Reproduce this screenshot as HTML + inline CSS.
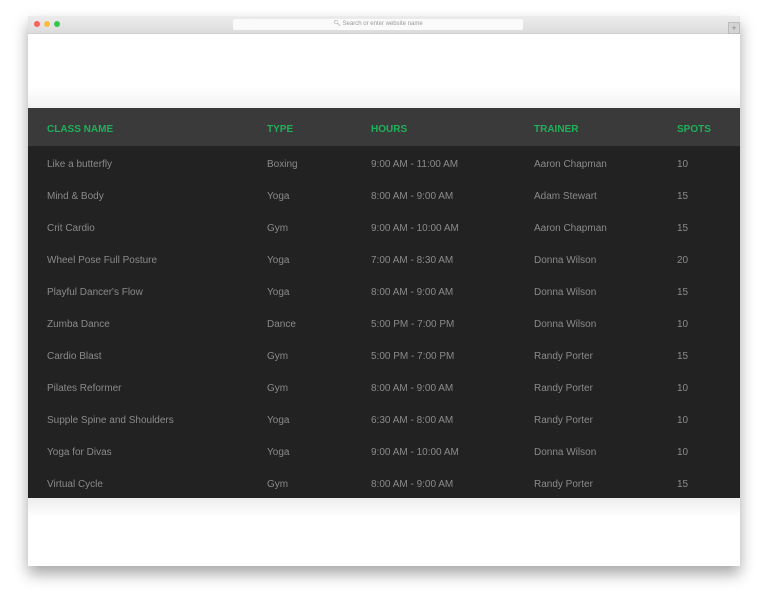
<!DOCTYPE html>
<html><head><style>
*{margin:0;padding:0;box-sizing:border-box}
body{width:768px;height:605px;background:#fff;font-family:"Liberation Sans",sans-serif;position:relative;overflow:hidden}
.win{position:absolute;left:28px;top:16px;width:712px;height:550px;background:#fff;box-shadow:0 8px 14px rgba(0,0,0,.35)}
.bar{height:18px;background:linear-gradient(#ececec,#dcdcdc);border-bottom:1px solid #cfcfcf;position:relative}
.dot{position:absolute;top:5px;width:6px;height:6px;border-radius:50%}
.url{position:absolute;left:205px;top:3px;width:290px;height:11px;background:#fafafa;border-radius:2px;font-size:6px;color:#999;text-align:center;line-height:11px}
.plus{position:absolute;right:0;top:6px;width:12px;height:12px;background:#d4d4d4;border:1px solid #bbb;font-size:9px;color:#888;text-align:center;line-height:10px}
.fadeT{position:absolute;left:0;top:70px;width:712px;height:22px;background:linear-gradient(rgba(0,0,0,0),rgba(0,0,0,.05))}
.fadeB{position:absolute;left:0;top:482px;width:712px;height:20px;background:linear-gradient(rgba(0,0,0,.07),rgba(0,0,0,0))}
.tbl{position:absolute;left:0;top:92px;width:712px}
.hd{height:38px;background:#3a3a3a;position:relative}
.bd{background:#222}
.row{height:32px;position:relative}
.c{position:absolute;top:3px;font-size:10px;white-space:nowrap}
.hd .c{line-height:38px;color:#1fb05a;font-weight:bold;font-size:10px}
.row .c{line-height:32px;color:#8a8a8a}
.c1{left:19px}.c2{left:239px}.c3{left:343px}.c4{left:506px}.c5{left:649px}
</style></head><body>
<div class="win">
<div class="bar">
<div class="dot" style="left:6px;background:#fc605b"></div>
<div class="dot" style="left:16px;background:#fdbc40"></div>
<div class="dot" style="left:26px;background:#34c84a"></div>
<div class="url">&#x1F50D;&#xFE0E; Search or enter website name</div>
<div class="plus">+</div>
</div>
<div class="fadeT"></div>
<div class="fadeB"></div>
<div class="tbl">
<div class="hd"><div class="c c1">CLASS NAME</div><div class="c c2">TYPE</div><div class="c c3">HOURS</div><div class="c c4">TRAINER</div><div class="c c5">SPOTS</div></div>
<div class="bd">
<div class="row"><div class="c c1">Like a butterfly</div><div class="c c2">Boxing</div><div class="c c3">9:00 AM - 11:00 AM</div><div class="c c4">Aaron Chapman</div><div class="c c5">10</div></div>
<div class="row"><div class="c c1">Mind &amp; Body</div><div class="c c2">Yoga</div><div class="c c3">8:00 AM - 9:00 AM</div><div class="c c4">Adam Stewart</div><div class="c c5">15</div></div>
<div class="row"><div class="c c1">Crit Cardio</div><div class="c c2">Gym</div><div class="c c3">9:00 AM - 10:00 AM</div><div class="c c4">Aaron Chapman</div><div class="c c5">15</div></div>
<div class="row"><div class="c c1">Wheel Pose Full Posture</div><div class="c c2">Yoga</div><div class="c c3">7:00 AM - 8:30 AM</div><div class="c c4">Donna Wilson</div><div class="c c5">20</div></div>
<div class="row"><div class="c c1">Playful Dancer's Flow</div><div class="c c2">Yoga</div><div class="c c3">8:00 AM - 9:00 AM</div><div class="c c4">Donna Wilson</div><div class="c c5">15</div></div>
<div class="row"><div class="c c1">Zumba Dance</div><div class="c c2">Dance</div><div class="c c3">5:00 PM - 7:00 PM</div><div class="c c4">Donna Wilson</div><div class="c c5">10</div></div>
<div class="row"><div class="c c1">Cardio Blast</div><div class="c c2">Gym</div><div class="c c3">5:00 PM - 7:00 PM</div><div class="c c4">Randy Porter</div><div class="c c5">15</div></div>
<div class="row"><div class="c c1">Pilates Reformer</div><div class="c c2">Gym</div><div class="c c3">8:00 AM - 9:00 AM</div><div class="c c4">Randy Porter</div><div class="c c5">10</div></div>
<div class="row"><div class="c c1">Supple Spine and Shoulders</div><div class="c c2">Yoga</div><div class="c c3">6:30 AM - 8:00 AM</div><div class="c c4">Randy Porter</div><div class="c c5">10</div></div>
<div class="row"><div class="c c1">Yoga for Divas</div><div class="c c2">Yoga</div><div class="c c3">9:00 AM - 10:00 AM</div><div class="c c4">Donna Wilson</div><div class="c c5">10</div></div>
<div class="row"><div class="c c1">Virtual Cycle</div><div class="c c2">Gym</div><div class="c c3">8:00 AM - 9:00 AM</div><div class="c c4">Randy Porter</div><div class="c c5">15</div></div>
</div>
</div>
</div>
</body></html>
